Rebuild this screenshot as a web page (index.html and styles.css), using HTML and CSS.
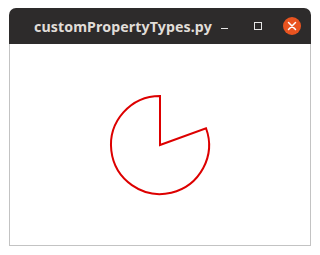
FILE: index.html
```html
<!DOCTYPE html>
<html>
<head>
<meta charset="utf-8">
<link rel="stylesheet" href="styles.css">
</head>
<body>
<div class="window">
  <div class="titlebar">
    <span class="title">customPropertyTypes.py</span>
    <span class="btn-min"></span>
    <span class="btn-max"></span>
    <span class="btn-close">
      <svg width="10" height="10" viewBox="0 0 10 10"><path d="M1.5 1.5 L8.5 8.5 M8.5 1.5 L1.5 8.5" stroke="#fff" stroke-width="1.5" stroke-linecap="round"/></svg>
    </span>
  </div>
  <div class="content">
    <svg class="pie" width="300" height="201" viewBox="0 0 300 201">
      <path d="M150 101 L150 52 A49 49 0 1 0 196.04 84.24 Z" fill="none" stroke="#dd0000" stroke-width="2" stroke-linejoin="miter"/>
    </svg>
  </div>
</div>
</body>
</html>
```
FILE: styles.css
```css
html, body {
  margin: 0;
  padding: 0;
  background: #ffffff;
}
body {
  padding: 8px 9px 0 9px;
  width: 302px;
}
.window {
  width: 302px;
  display: flex;
  flex-direction: column;
}
.titlebar {
  height: 36px;
  background: #2d2b2b;
  border-radius: 7px 7px 0 0;
  display: flex;
  align-items: center;
}
.title {
  margin-left: 25px;
  font-family: "Noto Sans", "DejaVu Sans", sans-serif;
  font-weight: bold;
  font-size: 14.2px;
  color: #e0ddd8;
  letter-spacing: 0.1px;
  width: 183px;
  white-space: nowrap;
}
.btn-min {
  margin-left: 4px;
  width: 7px;
  height: 1.5px;
  margin-top: 5px;
  background: #e6e6e6;
}
.btn-max {
  margin-left: 26px;
  width: 6px;
  height: 6px;
  border: 1.3px solid #e6e6e6;
}
.btn-close {
  margin-left: 21px;
  width: 18px;
  height: 18px;
  border-radius: 50%;
  background: #e95420;
  display: flex;
  align-items: center;
  justify-content: center;
}
.btn-close svg {
  display: block;
}
.content {
  height: 201px;
  background: #ffffff;
  border: 1px solid #c3c3c3;
  border-top: none;
}
.pie {
  display: block;
}
```
